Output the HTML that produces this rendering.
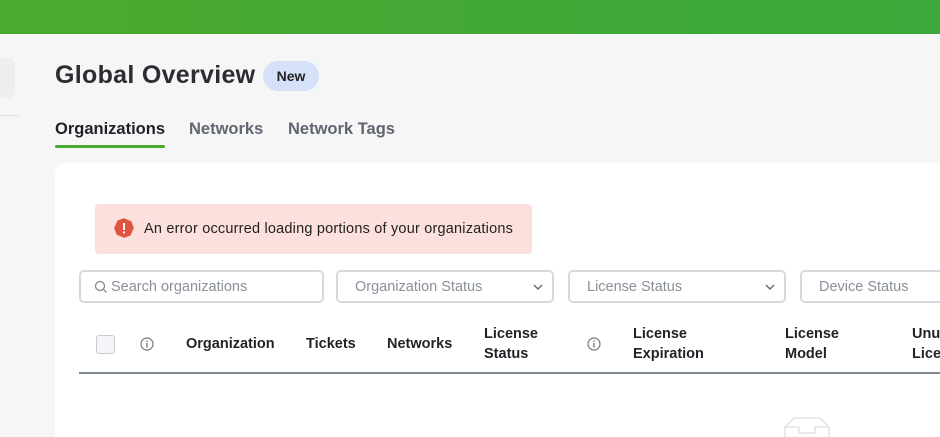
<!DOCTYPE html>
<html><head><style>
*{margin:0;padding:0;box-sizing:border-box}
html,body{width:940px;height:437px;overflow:hidden}
body{background:#f6f6f6;font-family:"Liberation Sans",sans-serif;position:relative;color:#1f2328}
.top{position:absolute;left:0;top:0;width:940px;height:34px;background:linear-gradient(90deg,#4ba92f,#3aa83a)}
.side{position:absolute;left:-10px;top:58px;width:25px;height:40px;background:#eceef0;border-radius:7px}
.sl{position:absolute;left:0;top:115px;width:19px;height:1px;background:#ddd}
h1{position:absolute;left:55px;top:61px;font-size:25px;font-weight:bold;color:#2b2d33;letter-spacing:0.3px}
.badge{position:absolute;left:263px;top:61px;width:56px;height:30px;border-radius:15px;background:#d4e1f8;font-size:14px;font-weight:bold;text-align:center;line-height:30px;color:#222}
.tab{position:absolute;top:120px;font-size:16.5px;font-weight:bold;color:#606670}
.act{color:#1e2228}
.ul{position:absolute;left:55px;top:145px;width:110px;height:3px;background:#4aa832;border-radius:2px}
.card{position:absolute;left:55px;top:163px;width:885px;height:274px;background:#fff;border-radius:10px 0 0 0}
.err{position:absolute;left:95px;top:204px;width:437px;height:50px;background:#fbe0dd;border-radius:4px;font-size:14.5px;letter-spacing:0.2px;line-height:50px;padding-left:49px;color:#222}
.ei{position:absolute;left:114px;top:218px}
.in{position:absolute;top:270px;height:33px;border:2px solid #d5d8dc;border-radius:5px;font-size:14.5px;color:#8a9099;line-height:31px}
.chev{position:absolute;right:8px;top:10px}
.th{position:absolute;font-size:14.5px;font-weight:bold;color:#1f2328;line-height:20px}
.cb{position:absolute;left:96px;top:335px;width:19px;height:19px;border:1.5px solid #c8ccd0;border-radius:3px;background:#f4f5f6}
.hl{position:absolute;left:79px;top:372px;width:861px;height:2px;background:#828a92}
</style></head><body>
<div class="top"></div>
<div class="side"></div><div class="sl"></div>
<h1>Global Overview</h1>
<div class="badge">New</div>
<div class="tab act" style="left:55px">Organizations</div>
<div class="tab" style="left:189px">Networks</div>
<div class="tab" style="left:288px">Network Tags</div>
<div class="ul"></div>
<div class="card"></div>
<div class="err">An error occurred loading portions of your organizations</div>
<svg class="ei" width="20" height="20" viewBox="0 0 20 20"><polygon points="6,1 14,1 19,6 19,14 14,19 6,19 1,14 1,6" fill="#e0533f" transform="rotate(22.5 10 10)"/><rect x="9" y="5" width="2" height="7" fill="#fff"/><rect x="9" y="13.5" width="2" height="2" fill="#fff"/></svg>
<div class="in" style="left:79px;width:245px;padding-left:30px">Search organizations
<svg style="position:absolute;left:13px;top:8px" width="14" height="14" viewBox="0 0 14 14"><circle cx="6" cy="6" r="4.5" fill="none" stroke="#8a9099" stroke-width="1.4"/><line x1="9.3" y1="9.3" x2="12.5" y2="12.5" stroke="#8a9099" stroke-width="1.4"/></svg></div>
<div class="in" style="left:336px;width:218px;padding-left:17px">Organization Status<svg class="chev" width="12" height="10" viewBox="0 0 12 10"><path d="M2 3l4 4 4-4" fill="none" stroke="#666" stroke-width="1.4"/></svg></div>
<div class="in" style="left:568px;width:218px;padding-left:17px">License Status<svg class="chev" width="12" height="10" viewBox="0 0 12 10"><path d="M2 3l4 4 4-4" fill="none" stroke="#666" stroke-width="1.4"/></svg></div>
<div class="in" style="left:800px;width:150px;padding-left:17px;border-right:none;border-radius:5px 0 0 5px">Device Status</div>
<div class="cb"></div>
<svg style="position:absolute;left:140px;top:337px" width="14" height="14" viewBox="0 0 14 14"><circle cx="7" cy="7" r="6" fill="none" stroke="#777" stroke-width="1.2"/><rect x="6.3" y="6" width="1.4" height="4.5" fill="#777"/><rect x="6.3" y="3.5" width="1.4" height="1.4" fill="#777"/></svg>
<svg style="position:absolute;left:587px;top:337px" width="14" height="14" viewBox="0 0 14 14"><circle cx="7" cy="7" r="6" fill="none" stroke="#777" stroke-width="1.2"/><rect x="6.3" y="6" width="1.4" height="4.5" fill="#777"/><rect x="6.3" y="3.5" width="1.4" height="1.4" fill="#777"/></svg>
<div class="th" style="left:186px;top:334px">Organization</div>
<div class="th" style="left:306px;top:334px">Tickets</div>
<div class="th" style="left:387px;top:334px">Networks</div>
<div class="th" style="left:484px;top:324px">License<br>Status</div>
<div class="th" style="left:633px;top:324px">License<br>Expiration</div>
<div class="th" style="left:785px;top:324px">License<br>Model</div>
<div class="th" style="left:912px;top:324px;white-space:nowrap">Unused<br>Licenses</div>
<div class="hl"></div>
<svg style="position:absolute;left:784px;top:417px" width="48" height="20" viewBox="0 0 48 20"><path d="M1 20V10L10 1h26l9 9v10" fill="none" stroke="#ddd" stroke-width="1.3"/><path d="M1 10h14v6h16v-6h14" fill="none" stroke="#ddd" stroke-width="1.3"/></svg>
</body></html>
